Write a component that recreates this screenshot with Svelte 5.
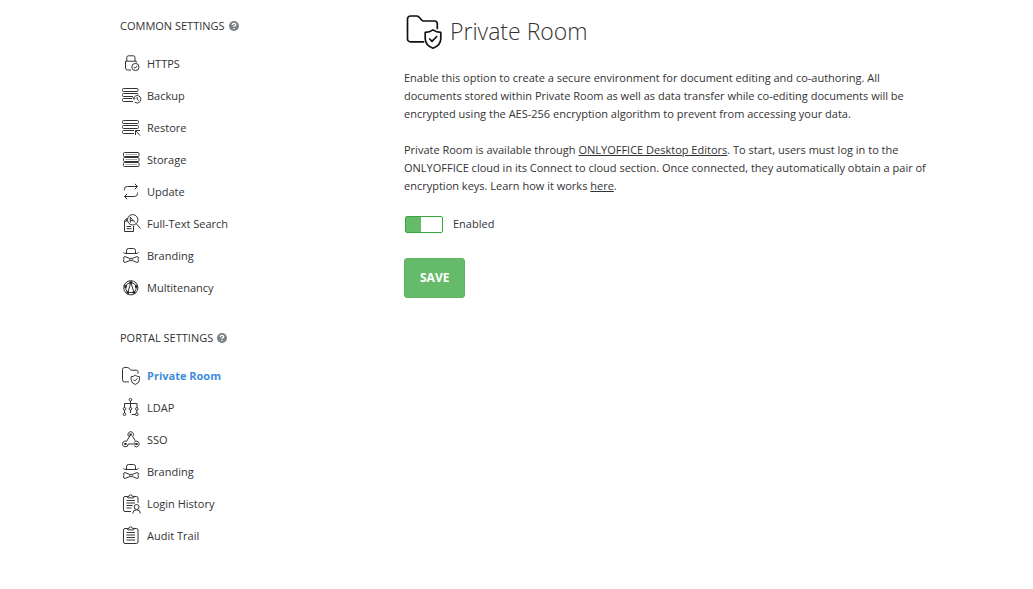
<script>
  let enabled = $state(true);
  let current = $state('Private Room');

  const groups = [
    {
      title: 'COMMON SETTINGS',
      items: [
        ['HTTPS', 'lock'],
        ['Backup', 'backup'],
        ['Restore', 'restore'],
        ['Storage', 'storage'],
        ['Update', 'update'],
        ['Full-Text Search', 'search'],
        ['Branding', 'branding'],
        ['Multitenancy', 'globe']
      ]
    },
    {
      title: 'PORTAL SETTINGS',
      items: [
        ['Private Room', 'folder'],
        ['LDAP', 'ldap'],
        ['SSO', 'sso'],
        ['Branding', 'branding'],
        ['Login History', 'login'],
        ['Audit Trail', 'audit']
      ]
    }
  ];
</script>

{#snippet icon(name)}
  <svg class="icon" viewBox="0 0 22 22" aria-hidden="true">
    {#if name === 'lock'}
      <path d="M6.8 8V4.5a1.7 1.7 0 0 1 1.7-1.7h4.8A1.7 1.7 0 0 1 15 4.500V8M5.500 8.200h10.800M16.300 8.200v1.300M5.500 8.200v6.800a2 2 0 0 0 2 2h3.500" />
      <circle cx="15.400" cy="14" r="3.600" />
      <path d="M13.700 14l1.300 1.300 2.200-2.500" />
    {:else if name === 'backup'}
      <rect x="2.500" y="3.500" width="15.500" height="3" rx="1" />
      <path d="M17 8.500H3.500a1 1 0 0 0-1 1v1a1 1 0 0 0 1 1H13M12 13.500H3.500a1 1 0 0 0-1 1v1a1 1 0 0 0 1 1H13M17 8.500a1 1 0 0 1 1 1" />
      <path d="M13.700 13a3.700 3.700 0 1 1 1 4M12.700 12.400l.9 1.800 1.800-.8M17.200 12v2.500l1.600 1" />
    {:else if name === 'restore'}
      <rect x="2.500" y="3.500" width="16" height="3" rx="1" />
      <rect x="2.500" y="8.500" width="16" height="3" rx="1" />
      <path d="M14 13.500H3.500a1 1 0 0 0-1 1v1a1 1 0 0 0 1 1H14M15.500 18v-4.500H20M15.500 13.500l4.500 5" />
    {:else if name === 'storage'}
      <path class="soft" d="M5.500 5.500h11.500M5.500 10.500h11.500M5.500 15.500h11.500" />
      <rect x="3.500" y="3.500" width="15.500" height="4" rx="1" />
      <rect x="3.500" y="8.500" width="15.500" height="4" rx="1" />
      <rect x="3.500" y="13.500" width="15.500" height="4" rx="1" />
    {:else if name === 'update'}
      <path d="M4.300 9.500V8.500a3 3 0 0 1 3-3h10M14.800 2.800l2.700 2.700-2.700 2.700M17.500 11.500v1a3 3 0 0 1-3 3H4.500M7.200 12.800l-2.700 2.700 2.700 2.700" />
    {:else if name === 'search'}
      <circle cx="12.700" cy="6.800" r="5.200" />
      <path d="M16.200 10.700l4.300 4.800M10.300 9.500v-5.200l4.700 5.200M10.300 7.700h3" />
      <path d="M6.700 5.500L4.500 7.700v10.800h9v-5.500M6.700 5.500v2.700H4.500M6.500 13.500h4.500M6.500 15.700h5" />
    {:else if name === 'branding'}
      <path d="M6.500 8.300V5.500a2 2 0 0 1 2-2h5a2 2 0 0 1 2 2v2.800M3.300 7.300q.7 1.200 2.700 1.200h10q2 0 2.700-1.200" />
      <circle cx="11" cy="14.500" r="1.300" />
      <path d="M9.800 13.500L5 11.600q-1.500 0-1.500 1.500.8 1.400 0 2.800 0 1.500 1.500 1.500l4.800-1.900M12.200 13.500L17 11.600q1.500 0 1.500 1.500-.8 1.400 0 2.800 0 1.500-1.500 1.500l-4.800-1.900" />
    {:else if name === 'globe'}
      <circle cx="10.800" cy="10.800" r="7.100" />
      <path d="M10.800 5.500Q6.800 6 5.500 9.500 5.300 13 7.800 15.500h6.200Q16.600 13 16.300 9.500 14.800 6 10.800 5.500L7.800 15.500M10.800 5.500L14 15.500M5.500 9.500L4 8M16.300 9.500L17.700 8" />
      <path class="dot" d="M9.500 4.200h2.600v2.600H9.500zM4.300 8.200h2.500v2.500H4.300zM15 8.200h2.500v2.500H15zM6.500 14.200H9v2.500H6.500zM12.800 14.200h2.500v2.500h-2.500z" />
    {:else if name === 'folder'}
      <path d="M9 16.900H4.500a2 2 0 0 1-2-2V4.500a2 2 0 0 1 2-2H7.700a1.500 1.500 0 0 1 1.100.5l1.500 1.700a1.500 1.500 0 0 0 1.100.5h5.100a1.500 1.500 0 0 1 1.500 1.500v2" />
      <path d="M15.300 10.300q1.800 1.300 4.200 1.400v2.800q0 3.500-4.200 5-4.200-1.500-4.200-5v-2.800q2.400-.1 4.200-1.400zM13.300 14.500l1.500 1.500 2.700-2.800" />
    {:else if name === 'ldap'}
      <path d="M10.500 4v6.500M4.500 10.500v-4h12.500v4M4.500 13v3M10.500 13v3M16.800 13v3M11.800 17.500h3.700" />
      <circle cx="10.500" cy="2.700" r="1.300" />
      <circle cx="4.500" cy="11.800" r="1.300" />
      <circle cx="4.500" cy="17.300" r="1.300" />
      <circle cx="10.500" cy="11.800" r="1.300" />
      <circle cx="16.800" cy="11.800" r="1.300" />
      <circle cx="16.800" cy="17.300" r="1.300" />
    {:else if name === 'sso'}
      <path d="M9 7.700A2.800 2.800 0 1 1 12.700 7.500L15.200 11.700M10.100 6.500L6.500 12.500M6.500 12.400A2.800 2.800 0 1 0 8.200 15h7.500M14 13.500a2.800 2.800 0 1 1 .3 3.300" />
      <path class="dot" d="M9.500 4.600h2.200v2.200H9.500zM4.300 13.900h2.200v2.200H4.300zM15.400 13.900h2.200v2.200h-2.200z" />
    {:else}
      <path d="M7.700 3.500H5a1.500 1.500 0 0 0-1.500 1.500v12A1.500 1.500 0 0 0 5 18.500h{name === 'login' ? 6 : 11.500}M13.500 3.500h3A1.500 1.500 0 0 1 18 5v{name === 'login' ? 5 : 12}{name === 'login' ? '' : 'a1.500 1.500 0 0 1-1.500 1.500'}" />
      <path d="M7.700 4.900V3.300h1.500q0-1.500 1.500-1.500t1.500 1.500h1.500v1.600zM6.500 7.500H15M6.500 10H15" />
      {#if name === 'login'}
        <path d="M6.500 12.500h6M6.500 15h5M12.800 20.500q0-3.700 3.800-3.700t3.800 3.700" />
        <circle cx="16.600" cy="14" r="2.500" />
      {:else}
        <path d="M6.500 12.500H15M6.500 15H15" />
      {/if}
    {/if}
  </svg>
{/snippet}

<div class="page">
  <nav aria-label="Settings">
    {#each groups as group}
      <section>
        <h2>
          {group.title}
          <button class="help" aria-label="Help">
            <svg viewBox="0 0 10 10" aria-hidden="true">
              <circle cx="5" cy="5" r="5" />
              <path d="M3.300 3.900Q3.300 2.400 5 2.400t1.700 1.400Q6.700 4.800 5 5.300v.6M5 7v1.100" />
            </svg>
          </button>
        </h2>
        <ul>
          {#each group.items as [label, name]}
            <li>
              <a href="#{name}" class:active={current === label} onclick={() => (current = label)}>
                {@render icon(name)}
                <span>{label}</span>
              </a>
            </li>
          {/each}
        </ul>
      </section>
    {/each}
  </nav>

  <main>
    <h1>
      <svg viewBox="0 0 40 40" aria-hidden="true">
        <path d="M19.500 30.900H6.500a3 3 0 0 1-3-3V8a3 3 0 0 1 3-3h6.200a3 3 0 0 1 2.200 1l2.700 3a3 3 0 0 0 2.200 1h11a2.500 2.500 0 0 1 2.500 2.500v5" />
        <path d="M29 18.900q3.300 2.300 7.800 2.500v6q0 6.700-7.800 9.800-7.800-3.100-7.800-9.800v-6q4.500-.2 7.800-2.500zM25.700 28l2.300 2.300 4.700-4.800" />
      </svg>
      <span>Private Room</span>
    </h1>
    <p>
      Enable this option to create a secure environment for document editing and co-authoring. All
      documents stored within Private Room as well as data transfer while co-editing documents will
      be encrypted using the AES-256 encryption algorithm to prevent from accessing your data.
    </p>
    <p>
      Private Room is available through <a href="#editors">ONLYOFFICE Desktop Editors</a>. To start,
      users must log in to the ONLYOFFICE cloud in its Connect to cloud section. Once connected,
      they automatically obtain a pair of encryption keys. Learn how it works <a href="#help">here</a>.
    </p>
    <label>
      <input type="checkbox" bind:checked={enabled} />
      {enabled ? 'Enabled' : 'Disabled'}
    </label>
    <button class="save">SAVE</button>
  </main>
</div>

<style>
  :global(body) {
    margin: 0;
    background: #fff;
  }

  .page {
    display: grid;
    grid-template-columns: 284px minmax(0, 1fr);
    padding: 11px 100px 32px 120px;
    color: #333;
    font: 11px/18px 'Open Sans', sans-serif;
  }

  nav {
    display: flex;
    flex-direction: column;
    gap: 25px;
    padding-top: 6px;
  }

  h1,
  h2,
  p,
  ul {
    margin: 0;
    padding: 0;
    font-weight: 400;
  }

  h2 {
    display: flex;
    align-items: center;
    gap: 4px;
    margin-bottom: 13px;
    font-size: 11px;
  }

  .help {
    display: flex;
    padding: 0;
    border: 0;
    background: none;
    cursor: pointer;
  }

  .help svg {
    width: 10px;
    height: 10px;
    fill: #7b8283;
  }

  .help path {
    fill: none;
    stroke: #fff;
    stroke-width: 1.3;
  }

  ul {
    list-style: none;
  }

  nav a {
    display: flex;
    align-items: center;
    gap: 5px;
    height: 32px;
    color: #333;
    text-decoration: none;
  }

  nav a.active {
    color: #3d8ddd;
    font-weight: 700;
  }

  .icon {
    width: 22px;
    height: 22px;
    fill: none;
    stroke: #333;
    stroke-width: 1;
    stroke-linejoin: round;
  }

  .icon .dot {
    fill: #222;
    stroke: none;
  }

  .icon .soft {
    stroke: #aaa;
  }

  main {
    max-width: 528px;
  }

  h1 {
    display: flex;
    align-items: center;
    gap: 6px;
    margin-bottom: 18px;
    font-size: 23px;
    font-weight: 300;
    line-height: 40px;
  }

  h1 svg {
    width: 40px;
    height: 40px;
    fill: none;
    stroke: #111;
    stroke-width: 1.7;
    stroke-linecap: round;
    stroke-linejoin: round;
  }

  p {
    margin-bottom: 18px;
  }

  p a {
    color: #333;
    text-decoration: underline;
  }

  label {
    display: flex;
    align-items: center;
    gap: 10px;
    width: max-content;
    margin-bottom: 23px;
    padding: 2px 1px;
  }

  input {
    appearance: none;
    width: 38px;
    height: 17px;
    margin: 0;
    border: 1px solid #35a93c;
    border-radius: 2px;
    background: linear-gradient(to right, #66bb6a 15px, #fff 15px);
    cursor: pointer;
  }

  input:not(:checked) {
    border-color: #999;
    background: linear-gradient(to left, #bbb 15px, #fff 15px);
  }

  .save {
    display: block;
    height: 40px;
    padding: 0 15px;
    border: 1px solid #5cb660;
    border-radius: 3px;
    background: #66bb6a;
    color: #fff;
    font: 700 12px/18px 'Open Sans', sans-serif;
    cursor: pointer;
  }
</style>
